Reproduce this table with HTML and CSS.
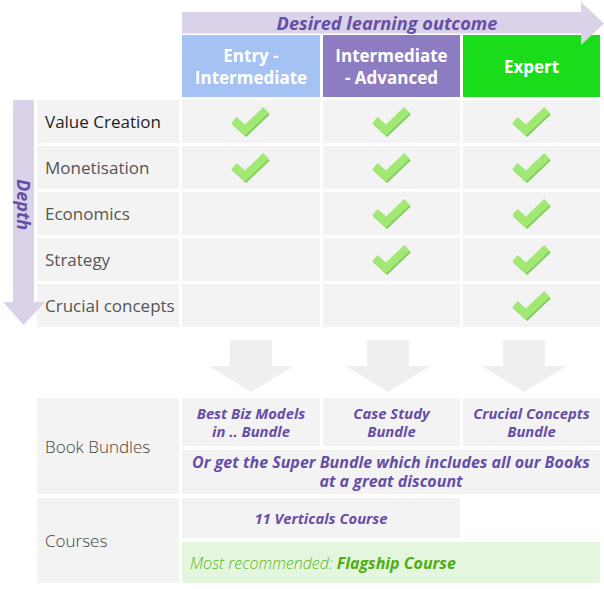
FILE: index.html
```html
<!DOCTYPE html>
<html lang="en">
<head>
<meta charset="utf-8">
<title>Learning outcome matrix</title>
<link rel="stylesheet" href="styles.css">
</head>
<body>
<svg class="defs" width="0" height="0" aria-hidden="true">
  <symbol id="chk" viewBox="0 0 40 31">
    <path d="M3 13 L14 23 L35 3" fill="none" stroke="#80cd58" stroke-width="8" transform="translate(1 1.6)"/>
    <path d="M3 13 L14 23 L35 3" fill="none" stroke="#a2e875" stroke-width="8"/>
  </symbol>
</svg>
<div class="page">
  <div class="outcome">
    <svg class="outcome-arrow" width="422" height="46" viewBox="0 0 422 46" aria-hidden="true">
      <rect x="0" y="12" width="400" height="21.5" fill="#d9d2e9"/>
      <polygon points="399,2 422,23.5 399,45" fill="#d9d2e9"/>
    </svg>
    <span class="outcome-label">Desired learning outcome</span>
  </div>

  <div class="matrix">
    <div class="corner"></div>
    <div class="lvl entry">Entry -<br>Intermediate</div>
    <div class="lvl inter">Intermediate<br>- Advanced</div>
    <div class="lvl expert">Expert</div>

    <div class="label dark">Value Creation</div>
    <div class="cell"><svg class="check"><use href="#chk"/></svg></div>
    <div class="cell"><svg class="check"><use href="#chk"/></svg></div>
    <div class="cell"><svg class="check"><use href="#chk"/></svg></div>

    <div class="label">Monetisation</div>
    <div class="cell"><svg class="check"><use href="#chk"/></svg></div>
    <div class="cell"><svg class="check"><use href="#chk"/></svg></div>
    <div class="cell"><svg class="check"><use href="#chk"/></svg></div>

    <div class="label">Economics</div>
    <div class="cell"></div>
    <div class="cell"><svg class="check"><use href="#chk"/></svg></div>
    <div class="cell"><svg class="check"><use href="#chk"/></svg></div>

    <div class="label">Strategy</div>
    <div class="cell"></div>
    <div class="cell"><svg class="check"><use href="#chk"/></svg></div>
    <div class="cell"><svg class="check"><use href="#chk"/></svg></div>

    <div class="label">Crucial concepts</div>
    <div class="cell"></div>
    <div class="cell"></div>
    <div class="cell"><svg class="check"><use href="#chk"/></svg></div>

    <div class="depth">
      <svg class="depth-arrow" width="45" height="225" viewBox="0 0 45 225" aria-hidden="true">
        <rect x="13" y="0" width="21" height="202" fill="#d9d2e9"/>
        <polygon points="3,202 45,202 23.5,225" fill="#d9d2e9"/>
      </svg>
      <span class="depth-label">Depth</span>
    </div>
  </div>

  <svg class="down-arrows" width="604" height="71" viewBox="0 0 604 71" aria-hidden="true">
    <polygon points="230,13 272,13 272,39 293.5,39 251,65 208.5,39 230,39" fill="#efefef"/>
    <polygon points="367,13 409,13 409,39 430.5,39 388,65 345.5,39 367,39" fill="#efefef"/>
    <polygon points="503,13 545,13 545,39 566.5,39 524,65 481.5,39 503,39" fill="#efefef"/>
  </svg>

  <div class="offer">
    <div class="olabel books">Book Bundles</div>
    <div class="bundle">Best Biz Models<br>in .. Bundle</div>
    <div class="bundle">Case Study<br>Bundle</div>
    <div class="bundle">Crucial Concepts<br>Bundle</div>
    <div class="bundle super">Or get the Super Bundle which includes all our Books<br>at a great discount</div>

    <div class="olabel courses">Courses</div>
    <div class="bundle verticals">11 Verticals Course</div>
    <div class="blank"></div>
    <div class="flagship"><span class="rec">Most recommended:&nbsp;</span><strong class="flag">Flagship Course</strong></div>
  </div>
</div>
</body>
</html>
```
FILE: styles.css
```css
* { box-sizing: border-box; }

body {
  margin: 0;
  background: #ffffff;
  font-family: "Open Sans", "Noto Sans", sans-serif;
}

.defs { position: absolute; width: 0; height: 0; }

.page {
  width: 604px;
  height: 589px;
  overflow: hidden;
}

/* top arrow */
.outcome {
  position: relative;
  height: 35px;
  margin-left: 182px;
  padding-right: 12px;
  display: flex;
  justify-content: center;
}

.outcome-arrow {
  position: absolute;
  left: 0;
  top: 0;
  z-index: 2;
  overflow: visible;
}

.outcome-label {
  position: relative;
  z-index: 3;
  margin-top: 12px;
  font-size: 18.2px;
  line-height: 22px;
  font-weight: 700;
  font-style: italic;
  color: #674ea7;
}

/* matrix */
.matrix {
  position: relative;
  margin-left: 37px;
  display: grid;
  grid-template-columns: 142px 138px 137px 137px;
  grid-template-rows: 62px repeat(5, 43px);
  gap: 3px;
}

.lvl {
  display: flex;
  align-items: center;
  justify-content: center;
  text-align: center;
  padding-top: 1px;
  color: #ffffff;
  font-size: 17px;
  line-height: 22px;
  font-weight: 700;
}

.entry { background: #a4c2f4; }
.inter { background: #8e7cc3; }
.expert { background: #1bdc1b; }

.label {
  background: #f3f3f3;
  display: flex;
  align-items: center;
  padding-left: 8px;
  white-space: nowrap;
  font-size: 17px;
  color: #555555;
}

.label.dark { color: #1f1f1f; }

.cell {
  background: #f3f3f3;
  display: flex;
  align-items: center;
  justify-content: center;
}

.check {
  width: 40px;
  height: 31px;
  margin-top: 1px;
}

.depth {
  position: absolute;
  left: -37px;
  top: 65px;
  width: 45px;
  height: 225px;
}

.depth-arrow { display: block; }

.depth-label {
  position: absolute;
  left: 13px;
  top: 79px;
  width: 21px;
  writing-mode: vertical-rl;
  font-size: 18px;
  line-height: 21px;
  font-weight: 700;
  font-style: italic;
  color: #674ea7;
}

.down-arrows { display: block; }

/* offers */
.offer {
  margin-left: 37px;
  display: grid;
  grid-template-columns: 142px 138px 137px 137px;
  grid-template-rows: 48px 44px 40px 41px;
  gap: 4px 3px;
}

.olabel {
  background: #f3f3f3;
  display: flex;
  align-items: center;
  padding-left: 8px;
  font-size: 17px;
  font-weight: 300;
  color: #444444;
}

.books { grid-row: 1 / 3; }
.courses { grid-row: 3 / 5; }

.bundle {
  background: #f3f3f3;
  display: flex;
  align-items: center;
  justify-content: center;
  text-align: center;
  font-size: 14.8px;
  line-height: 18px;
  font-weight: 700;
  font-style: italic;
  color: #674ea7;
}

.super {
  grid-column: 2 / 5;
  font-size: 16px;
  line-height: 19px;
}

.verticals { grid-column: 2 / 4; }

.blank { background: #ffffff; }

.flagship {
  grid-column: 2 / 5;
  background: #e4f6dd;
  display: flex;
  align-items: center;
  padding-left: 8px;
  font-size: 16px;
  font-style: italic;
  color: #5ab81d;
}

.rec { font-weight: 300; }
.flag { font-weight: 700; color: #4fae12; }
```
